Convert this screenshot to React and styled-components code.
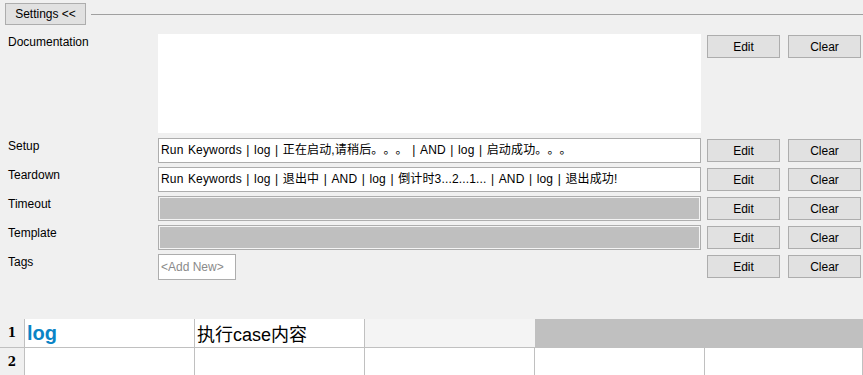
import React from 'react';
import styled, { createGlobalStyle } from 'styled-components';

const Global = createGlobalStyle`
  html, body {
    margin: 0;
    padding: 0;
    background: #f0f0f0;
    font-family: "Liberation Sans", "Noto Sans CJK SC", sans-serif;
    font-size: 12px;
    color: #000;
    text-spacing-trim: space-all;
  }
`;

const rows = [
  { label: 'Setup', kind: 'text', value: 'Run Keywords | log | 正在启动,请稍后。。。 | AND | log | 启动成功。。。' },
  { label: 'Teardown', kind: 'text', value: 'Run Keywords | log | 退出中 | AND | log | 倒计时3...2...1... | AND | log | 退出成功!' },
  { label: 'Timeout', kind: 'empty' },
  { label: 'Template', kind: 'empty' },
  { label: 'Tags', kind: 'tags' },
];

const App = () => {
  return (
    <Page>
      <Global />
      <Header>
        <ToggleButton>Settings &lt;&lt;</ToggleButton>
        <Rule />
      </Header>
      <Form>
        <Row tall>
          <Label>Documentation</Label>
          <DocArea />
          <Button>Edit</Button>
          <Button>Clear</Button>
        </Row>
        {rows.map((r) => (
          <Row key={r.label}>
            <Label>{r.label}</Label>
            {r.kind === 'text' && <Field>{r.value}</Field>}
            {r.kind === 'empty' && <Field disabled />}
            {r.kind === 'tags' && (
              <TagCell>
                <AddNew>&lt;Add New&gt;</AddNew>
              </TagCell>
            )}
            <Button>Edit</Button>
            <Button>Clear</Button>
          </Row>
        ))}
      </Form>
      <Grid>
        <RowHead>1</RowHead>
        <Cell><Keyword>log</Keyword></Cell>
        <Cell><CellText>执行case内容</CellText></Cell>
        <Cell tone="light" />
        <Cell tone="grey" span={2} />
        <RowHead>2</RowHead>
        <Cell />
        <Cell />
        <Cell />
        <Cell />
        <Cell />
      </Grid>
    </Page>
  );
};

export default App;

const Page = styled.div`
  width: 863px;
  height: 375px;
  overflow: hidden;
`;

const Header = styled.div`
  display: flex;
  align-items: center;
  padding: 3px 0 0 5px;
  gap: 5px;
`;

const ToggleButton = styled.button`
  height: 22px;
  width: 81px;
  padding: 0;
  border: 1px solid #adadad;
  background: #e1e1e1;
  font-family: "Liberation Sans", sans-serif;
  font-size: 12px;
  color: #000;
`;

const Rule = styled.div`
  flex: 1;
  height: 1px;
  background: #a0a0a0;
`;

const Form = styled.div`
  display: flex;
  flex-direction: column;
  gap: 4px;
  padding: 9px 0 0 0;
`;

const Row = styled.div`
  display: grid;
  grid-template-columns: 158px 543px 73px 73px;
  height: ${(p) => (p.tall ? '99px' : '25px')};
  margin-bottom: ${(p) => (p.tall ? '1px' : '0')};
  align-items: start;
  & > button:nth-of-type(1) {
    margin-left: 6px;
  }
  & > button:nth-of-type(2) {
    margin-left: 14px;
  }
`;

const Label = styled.div`
  padding: 0 0 0 8px;
  line-height: 16px;
`;

const DocArea = styled.div`
  background: #fff;
  height: 99px;
`;

const Field = styled.div`
  height: 25px;
  box-sizing: border-box;
  border: 1px solid #adadad;
  background: ${(p) => (p.disabled ? '#bfbfbf' : '#fff')};
  box-shadow: ${(p) => (p.disabled ? 'inset 0 0 0 1px #f4f4f4' : 'none')};
  padding: 0 0 0 2px;
  line-height: 23px;
  letter-spacing: 0.15px;
  word-spacing: 1px;
  white-space: nowrap;
  overflow: hidden;
`;

const TagCell = styled.div`
  display: flex;
`;

const AddNew = styled.div`
  width: 78px;
  height: 26px;
  box-sizing: border-box;
  border: 1px solid #adadad;
  background: #fff;
  color: #8a8a8a;
  padding-left: 2px;
  line-height: 24px;
`;

const Button = styled.button`
  width: 73px;
  height: 23px;
  margin-top: 1px;
  padding: 0;
  box-sizing: border-box;
  border: 1px solid #adadad;
  background: #e1e1e1;
  font-family: "Liberation Sans", sans-serif;
  font-size: 12px;
  color: #000;
`;

const Grid = styled.div`
  margin-top: 40px;
  display: grid;
  grid-template-columns: 25px repeat(4, 170px) 158px;
  grid-template-rows: 29px 28px;
  background: #fff;
`;

const RowHead = styled.div`
  background: #f0f0f0;
  border-right: 1px solid #c0c0c0;
  border-bottom: 1px solid #c0c0c0;
  display: flex;
  align-items: center;
  justify-content: center;
  font-family: "DejaVu Serif", serif;
  font-weight: bold;
  font-size: 12px;
`;

const Cell = styled.div`
  grid-column: span ${(p) => p.span || 1};
  background: ${(p) => (p.tone === 'grey' ? '#c0c0c0' : p.tone === 'light' ? '#f4f4f4' : '#fff')};
  border-right: ${(p) => (p.tone === 'grey' || p.tone === 'light' ? 'none' : '1px solid #c0c0c0')};
  border-bottom: 1px solid #c0c0c0;
  display: flex;
  align-items: center;
  padding-left: 2px;
  overflow: hidden;
`;

const Keyword = styled.span`
  color: #0a84c6;
  font-weight: bold;
  font-size: 20px;
  font-family: "Liberation Sans", sans-serif;
`;

const CellText = styled.span`
  font-size: 18px;
  font-family: "Liberation Sans", "Noto Sans CJK SC", sans-serif;
`;
